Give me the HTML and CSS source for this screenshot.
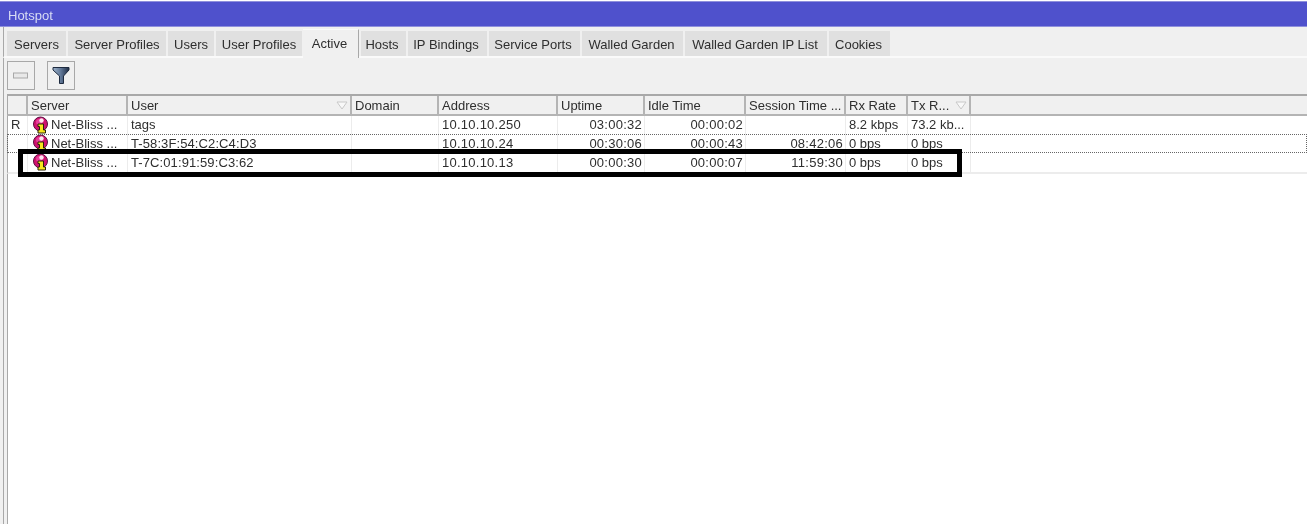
FILE: index.html
```html
<!DOCTYPE html>
<html lang="en">
<head>
<meta charset="utf-8">
<title>Hotspot</title>
<link rel="stylesheet" href="styles.css">
</head>
<body>
<div class="window">
  <div class="titlebar">Hotspot</div>
  <div class="client">
    <div class="tabs">
      <div class="tab t1">Servers</div>
      <div class="tab t2">Server Profiles</div>
      <div class="tab t3">Users</div>
      <div class="tab t4">User Profiles</div>
      <div class="tab t5 active">Active</div>
      <div class="tab t6">Hosts</div>
      <div class="tab t7">IP Bindings</div>
      <div class="tab t8">Service Ports</div>
      <div class="tab t9">Walled Garden</div>
      <div class="tab t10">Walled Garden IP List</div>
      <div class="tab t11">Cookies</div>
    </div>
    <div class="toolbar">
      <div class="btn"><svg width="16" height="8" viewBox="0 0 16 8"><rect x="0.5" y="1" width="14" height="5" fill="#e8e8e8" stroke="#a8a8a8"/></svg></div>
      <div class="btn"><svg width="18" height="19" viewBox="0 0 18 19"><defs><linearGradient id="f" x1="0" x2="1" y1="0" y2="0"><stop offset="0" stop-color="#9db2ca"/><stop offset="0.5" stop-color="#5f7696"/><stop offset="1" stop-color="#1f2d44"/></linearGradient></defs><path d="M1 1.500h16v2.500L11.500 10v7.500h-4V10L1 4z" fill="url(#f)" stroke="#1d2a3f" stroke-width="1"/></svg></div>
    </div>
    <div class="table">
      <div class="row head">
        <div class="c c0"></div>
        <div class="c c1">Server</div>
        <div class="c c2 sorted">User<svg class="sort" width="12" height="9" viewBox="0 0 12 9"><path d="M1 1h10L6 8z" fill="#f8f8f8" stroke="#c8c8c8"/></svg></div>
        <div class="c c3">Domain</div>
        <div class="c c4 plain">Address</div>
        <div class="c c5">Uptime</div>
        <div class="c c6">Idle Time</div>
        <div class="c c7">Session Time ...</div>
        <div class="c c8">Rx Rate</div>
        <div class="c c9 sorted">Tx R...<svg class="sort" width="12" height="9" viewBox="0 0 12 9"><path d="M1 1h10L6 8z" fill="#f8f8f8" stroke="#c8c8c8"/></svg></div>
        <div class="c c10"></div>
      </div>
      <div class="row r1">
        <div class="c c0 flag">R</div>
        <div class="c c1 srv"><svg class="info" width="17" height="18" viewBox="0 0 17 18"><use href="#info"/></svg>Net-Bliss ...</div>
        <div class="c c2">tags</div>
        <div class="c c3"></div>
        <div class="c c4">10.10.10.250</div>
        <div class="c c5 num">03:00:32</div>
        <div class="c c6 num">00:00:02</div>
        <div class="c c7 num"></div>
        <div class="c c8">8.2 kbps</div>
        <div class="c c9">73.2 kb...</div>
        <div class="c c10"></div>
      </div>
      <div class="row r2 selected">
        <div class="c c0"></div>
        <div class="c c1 srv"><svg class="info" width="17" height="18" viewBox="0 0 17 18"><use href="#info"/></svg>Net-Bliss ...</div>
        <div class="c c2 mac">T-58:3F:54:C2:C4:D3</div>
        <div class="c c3"></div>
        <div class="c c4">10.10.10.24</div>
        <div class="c c5 num">00:30:06</div>
        <div class="c c6 num">00:00:43</div>
        <div class="c c7 num">08:42:06</div>
        <div class="c c8">0 bps</div>
        <div class="c c9">0 bps</div>
        <div class="c c10"></div>
      </div>
      <div class="row r3">
        <div class="c c0"></div>
        <div class="c c1 srv"><svg class="info" width="17" height="18" viewBox="0 0 17 18"><use href="#info"/></svg>Net-Bliss ...</div>
        <div class="c c2 mac">T-7C:01:91:59:C3:62</div>
        <div class="c c3"></div>
        <div class="c c4">10.10.10.13</div>
        <div class="c c5 num">00:00:30</div>
        <div class="c c6 num">00:00:07</div>
        <div class="c c7 num">11:59:30</div>
        <div class="c c8">0 bps</div>
        <div class="c c9">0 bps</div>
        <div class="c c10"></div>
      </div>
    </div>
  </div>
</div>
<div class="highlight"></div>
<svg class="defs" width="0" height="0"><defs><g id="info"><circle cx="7.500" cy="8" r="7" fill="#d0126f" stroke="#5a1040" stroke-width="1"/><circle cx="6" cy="6" r="3" fill="#e8409a"/><circle cx="8.500" cy="4.500" r="2.200" fill="#ffe6f2"/><path d="M5 8h5.500v6h2V17H5v-3h1.500v-3.500H5z" fill="#f6e61e" stroke="#2a2408" stroke-width="1"/></g></defs></svg>
</body>
</html>
```
FILE: styles.css
```css
html, body { margin: 0; padding: 0; height: 100%; background: #fff; overflow: hidden; }
body { position: relative; font: 13px/18px "Liberation Sans", Arial, sans-serif; color: #2e2e2e; }
.window { height: 524px; display: flex; flex-direction: column; filter: blur(0.35px); }
.titlebar { margin-top: 1px; height: 26px; line-height: 28px; padding-left: 8px; background: #4f51cc; color: #d8dcf4; font-size: 13px; border-top: 1px solid #8f90dc; box-sizing: border-box; border-bottom: 1px solid #8f90dc; }
.client { flex: 1; display: flex; flex-direction: column; padding-left: 3px; background: #f0f0f0; }
.tabs { height: 31px; box-sizing: border-box; padding: 4px 0 0 3px; display: flex; gap: 2px; border-bottom: 2px solid #fafafa; border-left: 1px solid #a8a8a8; }
.tab { height: 25px; line-height: 27px; background: #e0e0e0; text-align: center; box-sizing: border-box; flex: none; }
.tab.active { background: #f0f0f0; height: 29px; margin-top: -2px; line-height: 27px; border-top: 1px solid #fafafa; border-right: 1px solid #a8a8a8; padding-right: 2px; }
.t1 { width: 59px; } .t2 { width: 98px; } .t3 { width: 46px; } .t4 { width: 86px; } .t5 { width: 56px; margin-left: -1px; } .t6 { width: 45px; padding-right: 3px; } .t7 { width: 79px; padding-right: 3px; } .t8 { width: 91px; padding-right: 3px; } .t9 { width: 101px; padding-right: 2px; } .t10 { width: 142px; padding-right: 2px; } .t11 { width: 61px; padding-right: 2px; }
.toolbar { height: 36px; box-sizing: border-box; padding: 3px 0 0 3px; display: flex; gap: 12px; border-left: 1px solid #a8a8a8; }
.btn { width: 28px; height: 29px; box-sizing: border-box; border: 1px solid #a8a8a8; background: #f0f0f0; display: flex; align-items: center; justify-content: center; }
.table { flex: 1; padding-left: 3px; border-left: 1px solid #a8a8a8; display: flex; flex-direction: column; }
.table::after { content: ""; flex: 1; background: #fff; border-left: 1px solid #a8a8a8; }
.row { display: flex; height: 19px; background: #fff; border-left: 1px solid #a8a8a8; flex: none; }
.c { box-sizing: border-box; flex: none; padding-left: 3px; white-space: nowrap; overflow: hidden; border-right: 1px solid #ececec; height: 100%; }
.c0 { width: 20px; } .c1 { width: 100px; } .c2 { width: 224px; } .c3 { width: 87px; } .c4 { width: 119px; } .c5 { width: 87px; } .c6 { width: 101px; } .c7 { width: 100px; } .c8 { width: 62px; } .c9 { width: 63px; } .c10 { flex: 1; border-right: 0; }
.head { background: #f0f0f0; border-top: 2px solid #a8a8a8; border-bottom: 2px solid #b4b4b4; box-sizing: content-box; height: 18px; }
.head .c { border-right: 2px solid #b4b4b4; line-height: 20px; }
.head .c10 { border-right: 0; }
.sorted { display: flex; align-items: flex-start; justify-content: space-between; padding-right: 2px; }
.sort { margin-top: 5px; }
.num { text-align: right; padding-right: 2px; letter-spacing: 0.25px; }
.c4 { letter-spacing: 0.25px; }
.c4.plain { letter-spacing: 0; }
.mac { letter-spacing: 0.1px; }
.srv { display: flex; align-items: flex-start; padding-left: 5px; }
.info { flex: none; margin-right: 1px; }
.flag { padding-left: 3px; }
.r1 { height: 18px; }
.r1 .c { line-height: 17px; }
.r2 .c, .r3 .c { line-height: 19px; }
.r2 { outline: 1px dotted #666; outline-offset: -1px; }
.r3 { border-bottom: 2px solid #ececec; }
.highlight { position: absolute; left: 18px; top: 149px; width: 944px; height: 28px; box-sizing: border-box; border: 5px solid #000; }
.defs { position: absolute; }
```
